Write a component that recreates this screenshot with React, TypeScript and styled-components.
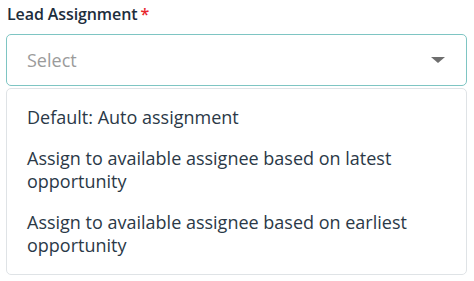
import React from 'react';
import styled, { createGlobalStyle } from 'styled-components';

const GlobalStyle = createGlobalStyle`
  body {
    margin: 0;
    background: #ffffff;
    font-family: 'Open Sans', 'Noto Sans', sans-serif;
  }
`;

const Wrapper = styled.div`
  padding: 3px 7px 0 6px;
  width: 474px;
  box-sizing: border-box;
`;

const Label = styled.label`
  display: block;
  margin: 0 0 9px 1px;
  font-size: 16px;
  font-weight: 600;
  line-height: 22px;
  letter-spacing: -0.1px;
  color: #1d2d3c;
`;

const Required = styled.span`
  color: #e8262d;
  margin-left: 3px;
`;

const SelectBox = styled.div`
  height: 52px;
  border: 1.5px solid #7ec5c3;
  border-radius: 5px;
  display: flex;
  align-items: center;
  justify-content: space-between;
  padding: 0 21px 0 20px;
  box-sizing: border-box;
`;

const Placeholder = styled.span`
  font-size: 18px;
  color: #9b9b9b;
`;

const Caret = styled.span`
  width: 0;
  height: 0;
  border-left: 7px solid transparent;
  border-right: 7px solid transparent;
  border-top: 6px solid #6e6e6e;
`;

const Menu = styled.ul`
  list-style: none;
  margin: 2px 0 0;
  padding: 7.5px 0 8.5px;
  border: 1px solid #dfe3e6;
  border-radius: 5px;
`;

const Option = styled.li`
  padding: 9px 20px;
  font-size: 18px;
  line-height: 23px;
  color: #2b3947;
`;

export default function App() {
  return (
    <>
      <GlobalStyle />
      <Wrapper>
        <Label>
          Lead Assignment<Required>*</Required>
        </Label>
        <SelectBox>
          <Placeholder>Select</Placeholder>
          <Caret />
        </SelectBox>
        <Menu>
          <Option>Default: Auto assignment</Option>
          <Option>Assign to available assignee based on latest opportunity</Option>
          <Option>Assign to available assignee based on earliest opportunity</Option>
        </Menu>
      </Wrapper>
    </>
  );
}
